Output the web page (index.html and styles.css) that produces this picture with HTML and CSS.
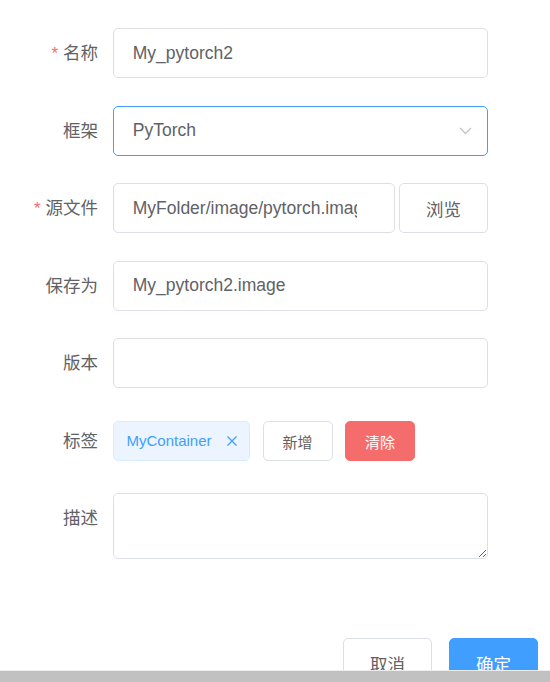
FILE: index.html
```html
<!DOCTYPE html>
<html lang="zh-CN">
<head>
<meta charset="utf-8">
<title>Form</title>
<link rel="stylesheet" href="styles.css">
</head>
<body>
<div class="page">
  <form class="form">
    <div class="form-item">
      <label class="label"><span class="req">*</span>名称</label>
      <div class="content">
        <input class="input" type="text" value="My_pytorch2">
      </div>
    </div>
    <div class="form-item">
      <label class="label">框架</label>
      <div class="content">
        <div class="select">
          <span>PyTorch</span>
          <svg class="chevron" width="13" height="8" viewBox="0 0 13 8"><polyline points="1,1 6.5,6.5 12,1" fill="none" stroke="#c0c4cc" stroke-width="1.3"/></svg>
        </div>
      </div>
    </div>
    <div class="form-item">
      <label class="label"><span class="req">*</span>源文件</label>
      <div class="content file-row">
        <input class="input input-file" type="text" value="MyFolder/image/pytorch.image">
        <button type="button" class="btn btn-browse">浏览</button>
      </div>
    </div>
    <div class="form-item">
      <label class="label">保存为</label>
      <div class="content">
        <input class="input" type="text" value="My_pytorch2.image">
      </div>
    </div>
    <div class="form-item">
      <label class="label">版本</label>
      <div class="content">
        <input class="input" type="text" value="">
      </div>
    </div>
    <div class="form-item">
      <label class="label">标签</label>
      <div class="content tag-row">
        <span class="tag">MyContainer<svg class="tag-close" width="12" height="12" viewBox="0 0 12 12"><path d="M1.5 1.5 L10.5 10.5 M10.5 1.5 L1.5 10.5" stroke="#409eff" stroke-width="1.3" fill="none"/></svg></span>
        <button type="button" class="btn btn-small btn-add">新增</button>
        <button type="button" class="btn btn-small btn-danger">清除</button>
      </div>
    </div>
    <div class="form-item form-item-area">
      <label class="label">描述</label>
      <div class="content">
        <textarea class="textarea"></textarea>
      </div>
    </div>
  </form>
  <div class="footer">
    <button type="button" class="btn btn-footer">取消</button>
    <button type="button" class="btn btn-footer btn-primary">确定</button>
  </div>
</div>
<div class="hscroll"></div>
</body>
</html>
```
FILE: styles.css
```css
html, body {
  margin: 0;
  padding: 0;
  background: #ffffff;
}
body {
  height: 100vh;
  overflow: hidden;
  font-family: "Liberation Sans", "Noto Sans CJK SC", sans-serif;
  color: #606266;
}
.page {
  padding: 28px 12px 0 13px;
}
.form {
  margin: 0;
}
.form-item {
  display: flex;
  height: 50px;
  margin-bottom: 27.5px;
}
.form-item-area {
  height: auto;
}
.label {
  width: 100px;
  height: 50px;
  flex-shrink: 0;
  box-sizing: border-box;
  padding-right: 15px;
  text-align: right;
  line-height: 50px;
  font-size: 17.5px;
  color: #606266;
  overflow: visible;
}
.req {
  color: #f56c6c;
  margin-right: 5px;
  font-size: 17px;
}
.content {
  width: 375px;
}
.input {
  display: block;
  width: 100%;
  height: 50px;
  box-sizing: border-box;
  border: 1px solid #dcdfe6;
  border-radius: 5px;
  padding: 0 18.75px;
  font-family: inherit;
  font-size: 17.5px;
  color: #606266;
  background: #fff;
  outline: none;
}
.select {
  display: flex;
  align-items: center;
  justify-content: space-between;
  height: 50px;
  box-sizing: border-box;
  border: 1px solid #409eff;
  border-radius: 5px;
  padding: 0 15px 0 18.75px;
  font-size: 17.5px;
  color: #606266;
}
.chevron {
  display: block;
  margin-top: 1px;
}
.file-row {
  display: flex;
  gap: 4px;
}
.input-file {
  flex: 1;
  min-width: 0;
  padding-right: 37px;
}
.btn {
  box-sizing: border-box;
  border: 1px solid #dcdfe6;
  border-radius: 5px;
  background: #fff;
  color: #606266;
  font-family: inherit;
  cursor: pointer;
  margin: 0;
}
.btn-browse {
  width: 89px;
  height: 50px;
  font-size: 17.5px;
  flex-shrink: 0;
}
.tag-row {
  display: flex;
  align-items: center;
  height: 50px;
  padding-top: 1px;
  box-sizing: border-box;
}
.tag {
  display: inline-flex;
  align-items: center;
  height: 40px;
  box-sizing: border-box;
  padding: 0 11px 0 12.5px;
  background: #ecf5ff;
  border: 1px solid #d9ecff;
  border-radius: 5px;
  color: #409eff;
  font-size: 15px;
  line-height: 38px;
}
.tag-close {
  display: block;
  margin-left: 14px;
}
.btn-small {
  height: 40px;
  width: 70px;
  font-size: 15px;
  padding: 0;
}
.btn-add {
  margin-left: 13px;
}
.btn-danger {
  margin-left: 12.5px;
  background: #f56c6c;
  border-color: #f56c6c;
  color: #fff;
}
.textarea {
  display: block;
  width: 100%;
  height: 66px;
  box-sizing: border-box;
  border: 1px solid #dcdfe6;
  border-radius: 5px;
  padding: 6px 18.75px;
  font-family: inherit;
  font-size: 17.5px;
  color: #606266;
  resize: vertical;
  outline: none;
}
.footer {
  display: flex;
  justify-content: flex-end;
  gap: 17px;
  margin-top: 79px;
}
.btn-footer {
  width: 89px;
  height: 50px;
  font-size: 17.5px;
  padding: 0;
}
.btn-primary {
  background: #409eff;
  border-color: #409eff;
  color: #fff;
}
.hscroll {
  position: fixed;
  left: 0;
  right: 0;
  bottom: 0;
  height: 11px;
  background: #c1c1c1;
  border-top: 1px solid #ececec;
}
```
